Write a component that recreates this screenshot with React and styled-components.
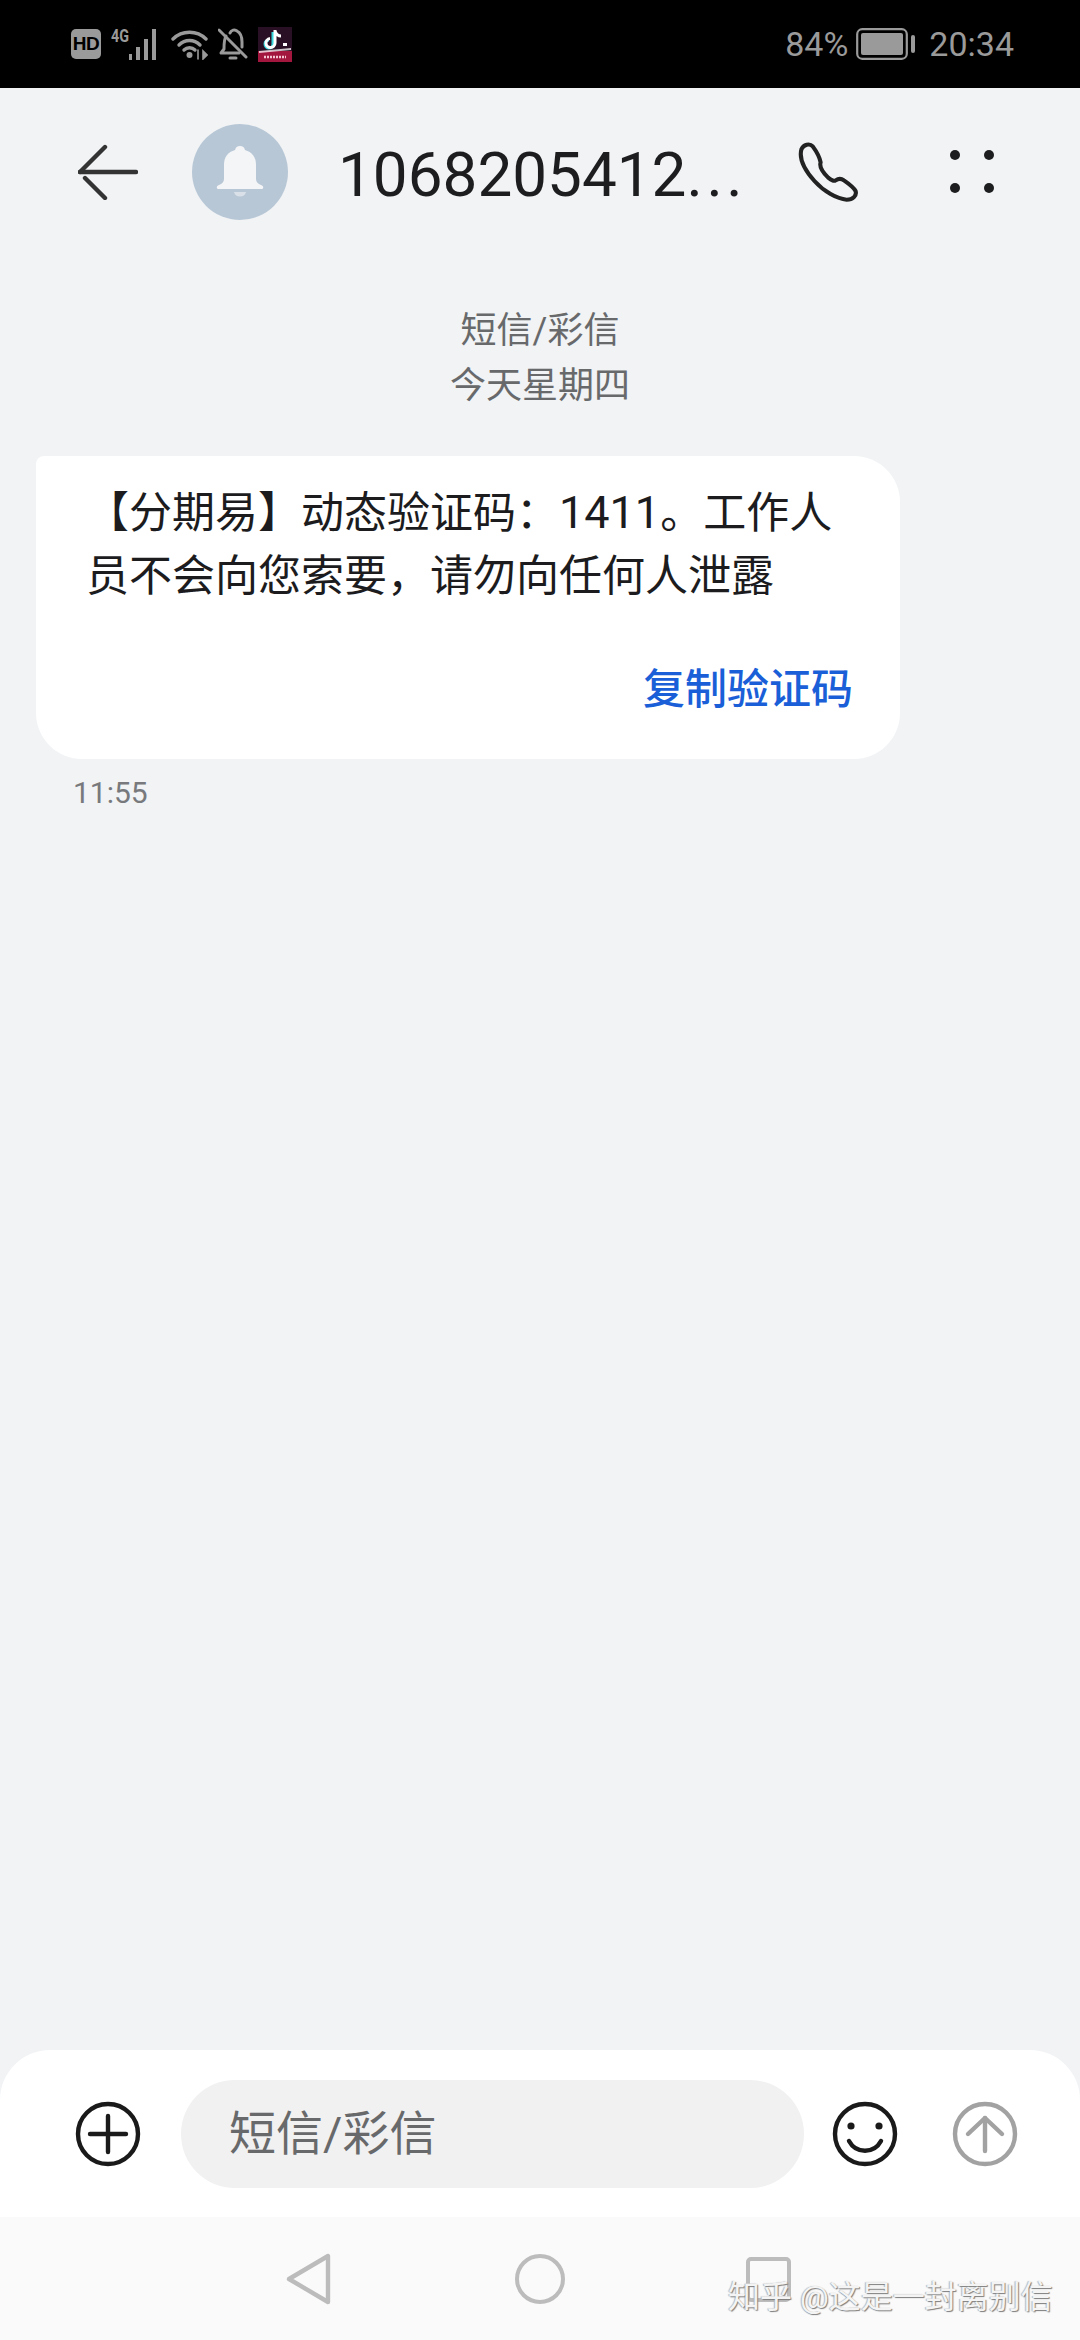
import React from 'react';
import styled, { createGlobalStyle } from 'styled-components';

const GlobalStyle = createGlobalStyle`
  html, body {
    margin: 0;
    padding: 0;
    background: #f1f3f5;
    font-family: Roboto, 'Noto Sans CJK SC', sans-serif;
  }
  * { box-sizing: border-box; }
`;

const Screen = styled.div`
  position: relative;
  width: 1080px;
  height: 2340px;
  display: flex;
  flex-direction: column;
  overflow: hidden;
  background: #f1f3f5;
`;

const StatusBar = styled.div`
  height: 88px;
  flex: none;
  background: #000;
  display: flex;
  align-items: center;
  justify-content: space-between;
  padding: 0 66px 0 71px;
  color: #9a9a9a;
`;

const StatusGroup = styled.div`
  display: flex;
  align-items: center;
  gap: ${(p) => p.$gap || 0}px;
`;

const HdBadge = styled.div`
  width: 30px;
  height: 30px;
  border-radius: 5px;
  background: #9a9a9a;
  color: #000;
  display: flex;
  align-items: center;
  justify-content: center;
  font-family: 'Liberation Sans', sans-serif;
  font-size: 19px;
  line-height: 20px;
  font-weight: 700;
  letter-spacing: -0.5px;
`;

const StatusText = styled.span`
  font-size: 34px;
  line-height: 40px;
  margin-left: ${(p) => p.$left || 0}px;
`;

const Header = styled.header`
  height: 168px;
  flex: none;
  display: flex;
  align-items: center;
  padding-left: 78px;
`;

const Avatar = styled.div`
  width: 96px;
  height: 96px;
  margin-left: 54px;
  flex: none;
  border-radius: 50%;
  background: #b8c7d6;
  display: flex;
  align-items: center;
  justify-content: center;
`;

const Title = styled.h1`
  margin: 6px 0 0 50px;
  width: 460px;
  flex: none;
  font-size: 62px;
  line-height: 70px;
  font-weight: 400;
  color: #1d1d1f;
  white-space: nowrap;
`;

const Dots = styled.span`
  letter-spacing: 3.6px;
`;

const Thread = styled.main`
  flex: 1;
  padding: 48px 36px 0;
`;

const DateBlock = styled.div`
  text-align: center;
  color: #68696b;
  font-size: 36px;
  line-height: 55px;
`;

const Bubble = styled.div`
  margin-top: 42px;
  width: 864px;
  height: 303px;
  background: #fff;
  border-radius: 8px 46px 46px 46px;
  padding: 26px 47px 0 50px;
  display: flex;
  flex-direction: column;
`;

const MessageLine = styled.div`
  height: 63px;
  font-size: 43px;
  line-height: 63px;
  color: #1c1c1e;
  white-space: nowrap;
`;

const Digits = styled.span`
  font-size: 45px;
  line-height: 50px;
`;

const CopyAction = styled.div`
  margin-top: 53px;
  text-align: right;
  font-size: 42px;
  line-height: 58px;
  font-weight: 500;
  color: #1a5fd8;
`;

const TimeStamp = styled.div`
  margin: 16px 0 0 37px;
  font-size: 30px;
  line-height: 36px;
  color: #77797c;
`;

const Composer = styled.div`
  height: 167px;
  flex: none;
  background: #fff;
  border-radius: 50px 50px 0 0;
  display: flex;
  align-items: flex-start;
  padding: 30px 0 0 75px;
`;

const IconSlot = styled.div`
  width: 66px;
  height: 108px;
  flex: none;
  display: flex;
  align-items: center;
  justify-content: center;
  margin-left: ${(p) => p.$left || 0}px;
`;

const InputPill = styled.div`
  width: 623px;
  height: 108px;
  flex: none;
  margin-left: 40px;
  border-radius: 54px;
  background: #f1f1f2;
  padding-left: 48px;
  font-size: 47px;
  line-height: 108px;
  color: #68696b;
`;

const NavBar = styled.nav`
  position: relative;
  height: 123px;
  flex: none;
  background: #fafafa;
  display: flex;
  align-items: flex-start;
  padding: 36px 0 0 286px;
`;

const NavCircle = styled.div`
  width: 50px;
  height: 50px;
  margin-left: 183px;
  margin-top: 1px;
  border: 4px solid #bcbcbc;
  border-radius: 50%;
`;

const NavSquare = styled.div`
  width: 45px;
  height: 45px;
  margin-left: 181px;
  margin-top: 4px;
  border: 4px solid #bcbcbc;
  border-radius: 5px;
`;

const Watermark = styled.div`
  position: absolute;
  left: 728px;
  top: 59px;
  font-size: 32px;
  line-height: 42px;
  white-space: nowrap;
  color: #f4f4f4;
  text-shadow: 1px 1px 1px #7d7d7d, -1px 0 1px #b5b5b5;
`;

const SignalIcon = () => (
  <svg width="50" height="44" viewBox="0 -5 50 44" fill="#9a9a9a">
    <text x="0" y="15" fontFamily="Roboto, sans-serif" fontSize="18" fontWeight="700" textLength="18" lengthAdjust="spacingAndGlyphs">4G</text>
    <rect x="18" y="27" width="3" height="6" />
    <rect x="25" y="20" width="4" height="13" />
    <rect x="33" y="12" width="4" height="21" />
    <rect x="41" y="2" width="4" height="31" />
  </svg>
);

const WifiIcon = () => (
  <svg width="37" height="32" viewBox="0 0 37 32" fill="none" stroke="#9a9a9a" strokeWidth="3.4" strokeLinecap="round">
    <path d="M2 11C11 2 26 2 35 11" />
    <path d="M8 17C14 11 23 11 29 17" />
    <path d="M13 22C16 19 21 19 24 22" />
    <circle cx="18.5" cy="27" r="3" fill="#9a9a9a" stroke="none" />
    <path d="M27 22V31M32 31V23L36 27Z" strokeWidth="1.6" fill="#9a9a9a" />
  </svg>
);

const MutedBellIcon = () => (
  <svg width="30" height="34" viewBox="0 0 30 34" fill="none" stroke="#9a9a9a" strokeWidth="3" strokeLinecap="round" strokeLinejoin="round">
    <path d="M8 9C6 12 6 16 6 22L3 26H21" />
    <path d="M12 6C13 3 17 2 19 4C23 6 24 10 24 15V20" />
    <path d="M1 3L28 30" />
    <path d="M12 31H18" />
  </svg>
);

const AppBadge = () => (
  <svg width="34" height="35" viewBox="0 0 34 35">
    <rect width="34" height="35" fill="#2a1024" />
    <rect y="24" width="34" height="11" fill="#a3173f" />
    <path d="M1 24L33 21V23L1 26Z" fill="#fff" opacity="0.75" />
    <path d="M15 5V17A4 4 0 1 1 11 13" fill="none" stroke="#35d7dc" strokeWidth="3" />
    <path d="M17 3V16A4.5 4.5 0 1 1 12 11.5M17 4C18 7 20 9 23 9" fill="none" stroke="#fff" strokeWidth="3" />
    <rect x="25" y="16" width="4" height="3" fill="#fff" />
    <path d="M6 30H28" stroke="#f3c6d2" strokeWidth="2.6" strokeDasharray="2 1" />
  </svg>
);

const BatteryIcon = () => (
  <svg width="59" height="32" viewBox="0 0 59 32">
    <rect x="1.2" y="1.2" width="49.6" height="29.6" rx="5" fill="none" stroke="#9a9a9a" strokeWidth="2.2" />
    <rect x="5" y="5" width="42" height="22" rx="2" fill="#9a9a9a" />
    <rect x="55" y="7" width="4" height="18" rx="2" fill="#9a9a9a" />
  </svg>
);

const BackArrow = () => (
  <svg width="60" height="56" viewBox="0 0 60 56" fill="none" stroke="#333" strokeWidth="4.4" strokeLinecap="round">
    <path d="M2 28H58" />
    <path d="M2 28L27 3" />
    <path d="M7 34L27 54" />
  </svg>
);

const AvatarBell = () => (
  <svg width="48" height="52" viewBox="0 0 48 52">
    <path fill="#f4f5f7" d="M24 0C21 0 20 1 19 4C12 6 8 11 8 19V33C8 36 6 38 3 39C0 40 0 43 3 43H45C48 43 48 40 45 39C42 38 40 36 40 33V19C40 11 36 6 29 4C28 1 27 0 24 0Z" />
    <path fill="#d9e0e8" d="M18 46H30C29 52 19 52 18 46Z" />
  </svg>
);

const PhoneIcon = () => (
  <svg width="60" height="60" viewBox="750 425 175 180" preserveAspectRatio="none" fill="none" stroke="#222" strokeWidth="12" strokeLinejoin="round">
    <path d="M760 447C766 432 784 428 793 438C803 452 813 470 816 486C812 498 822 516 838 532C848 540 854 544 860 540C868 534 876 534 884 540C898 550 912 560 918 572C922 586 910 598 892 598C864 596 826 574 798 542C772 512 752 476 760 447Z" />
  </svg>
);

const MoreIcon = () => (
  <svg width="44" height="44" viewBox="0 0 44 44" fill="#1d1d1f" style={{ marginLeft: 92 }}>
    <circle cx="5" cy="5" r="5" />
    <circle cx="39" cy="5" r="5" />
    <circle cx="5" cy="38" r="5" />
    <circle cx="39" cy="38" r="5" />
  </svg>
);

const PlusIcon = () => (
  <svg width="66" height="66" viewBox="0 0 66 66" fill="none" stroke="#1a1a1a" strokeWidth="4.4" strokeLinecap="round">
    <circle cx="33" cy="33" r="30" />
    <path d="M15 33H51" />
    <path d="M33 15V51" />
  </svg>
);

const SmileIcon = () => (
  <svg width="66" height="66" viewBox="0 0 66 66" fill="none" stroke="#1a1a1a" strokeWidth="4.4" strokeLinecap="round">
    <circle cx="33" cy="33" r="30" />
    <circle cx="19" cy="25" r="3.6" fill="#1a1a1a" stroke="none" />
    <circle cx="47" cy="25" r="3.6" fill="#1a1a1a" stroke="none" />
    <path d="M17 40C24 53 42 53 49 40" />
  </svg>
);

const SendIcon = () => (
  <svg width="66" height="66" viewBox="0 0 66 66" fill="none" stroke="#a2a2a2" strokeWidth="4.4" strokeLinecap="round" strokeLinejoin="round">
    <circle cx="33" cy="33" r="30" />
    <path d="M33 50V17" />
    <path d="M16 33L33 17L50 33" />
  </svg>
);

const NavBack = () => (
  <svg width="46" height="52" viewBox="0 0 46 52" fill="none" stroke="#bcbcbc" strokeWidth="4.4" strokeLinejoin="round">
    <path d="M42 3V49L3 26Z" />
  </svg>
);

export default function App() {
  return (
    <Screen>
      <GlobalStyle />
      <StatusBar>
        <StatusGroup $gap={10}>
          <HdBadge>HD</HdBadge>
          <SignalIcon />
          <WifiIcon />
          <MutedBellIcon />
          <AppBadge />
        </StatusGroup>
        <StatusGroup $gap={8}>
          <StatusText>84%</StatusText>
          <BatteryIcon />
          <StatusText $left={6}>20:34</StatusText>
        </StatusGroup>
      </StatusBar>
      <Header>
        <BackArrow />
        <Avatar><AvatarBell /></Avatar>
        <Title>1068205412<Dots>...</Dots></Title>
        <PhoneIcon />
        <MoreIcon />
      </Header>
      <Thread>
        <DateBlock>
          <div>短信/彩信</div>
          <div>今天星期四</div>
        </DateBlock>
        <Bubble>
          <MessageLine>【分期易】动态验证码：<Digits>1411</Digits>。工作人</MessageLine>
          <MessageLine>员不会向您索要，请勿向任何人泄露</MessageLine>
          <CopyAction>复制验证码</CopyAction>
        </Bubble>
        <TimeStamp>11:55</TimeStamp>
      </Thread>
      <Composer>
        <IconSlot><PlusIcon /></IconSlot>
        <InputPill>短信/彩信</InputPill>
        <IconSlot $left={28}><SmileIcon /></IconSlot>
        <IconSlot $left={54}><SendIcon /></IconSlot>
      </Composer>
      <NavBar>
        <NavBack />
        <NavCircle />
        <NavSquare />
        <Watermark>知乎 @这是一封离别信</Watermark>
      </NavBar>
    </Screen>
  );
}
